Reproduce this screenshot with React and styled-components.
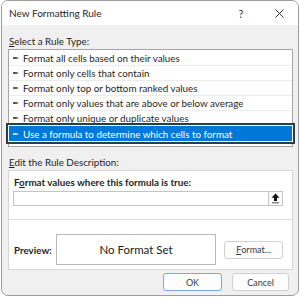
import React from "react";
import styled, { createGlobalStyle } from "styled-components";

const Global = createGlobalStyle`
  html, body {
    margin: 0;
    padding: 0;
    background: #ffffff;
  }
  body {
    font-family: Lato, "Noto Sans", sans-serif;
    color: #1f1f1f;
  }
`;

const Window = styled.div`
  box-sizing: border-box;
  width: 298px;
  height: 296px;
  margin-left: 1px;
  border: 1px solid #9c9c9c;
  border-radius: 7px;
  overflow: hidden;
  background: #f0f0f0;
  display: flex;
  flex-direction: column;
`;

const TitleBar = styled.div`
  height: 24px;
  background: #ffffff;
  display: flex;
  align-items: center;
  padding: 0 0 0 7px;
  font-size: 10px;
`;

const Title = styled.div`
  flex: 1;
`;

const TitleButton = styled.div`
  width: ${(p) => p.w}px;
  display: flex;
  justify-content: center;
  align-items: center;
  font-size: 11px;
  color: #333;
`;

const Body = styled.div`
  flex: 1;
  padding: 0 5px 0 6px;
  display: flex;
  flex-direction: column;
  font-size: 9.8px;
`;

const Label = styled.div`
  height: 12px;
  line-height: 12px;
  margin-top: ${(p) => p.top}px;
  padding-left: 1px;
`;

const Key = styled.span`
  text-decoration: underline;
  text-underline-offset: 1px;
`;

const ListBox = styled.div`
  margin-top: 2px;
  height: 98px;
  box-sizing: border-box;
  border: 1px solid #a4a4a4;
  background: #fff;
  padding-top: 1px;
`;

const Row = styled.div`
  position: relative;
  box-sizing: border-box;
  height: ${(p) => (p.selected ? 21 : 15)}px;
  margin: ${(p) => (p.selected ? "-3px -3px 0 -3px" : "0")};
  display: flex;
  align-items: center;
  gap: 4px;
  padding-left: ${(p) => (p.selected ? 5 : 4)}px;
  border-bottom: 1px solid #ececec;
  background: ${(p) => (p.selected ? "#0078d7" : "transparent")};
  color: ${(p) => (p.selected ? "#ffffff" : "#1f1f1f")};
  ${(p) =>
    p.selected &&
    `
    border: 2px solid #25404c;
    box-shadow: inset 0 0 0 1px #ffffff;
    z-index: 1;
  `}
`;

const Panel = styled.div`
  margin-top: 2px;
  height: 100px;
  box-sizing: border-box;
  border: 1px solid #d6d6d6;
  background: #fff;
  display: flex;
  flex-direction: column;
`;

const Heading = styled.div`
  font-weight: 700;
  padding: 5px 0 0 5px;
  height: 12px;
  line-height: 12px;
`;

const InputRow = styled.div`
  display: flex;
  margin: 3px 9px 0 4px;
  height: 15px;
`;

const Input = styled.div`
  flex: 1;
  box-sizing: border-box;
  border: 1px solid #c4c4c4;
  border-right: none;
`;

const IconButton = styled.div`
  width: 15px;
  box-sizing: border-box;
  border: 1px solid #c4c4c4;
  display: flex;
  align-items: center;
  justify-content: center;
  background: #fbfbfb;
`;

const Divider = styled.div`
  margin-top: 13px;
  border-top: 1px solid #dedede;
`;

const PreviewRow = styled.div`
  display: flex;
  align-items: center;
  margin-top: 14px;
  padding: 0 9px 0 5px;
`;

const PreviewLabel = styled.div`
  font-weight: 700;
  width: 42px;
`;

const PreviewBox = styled.div`
  width: 161px;
  height: 31px;
  box-sizing: border-box;
  border: 1px solid #b8b8b8;
  display: flex;
  align-items: center;
  justify-content: center;
  font-size: 11.5px;
  color: #1a1a1a;
`;

const Button = styled.div`
  box-sizing: border-box;
  width: ${(p) => p.w}px;
  height: 18px;
  margin-left: ${(p) => p.ml || 0}px;
  border: 1px solid ${(p) => (p.primary ? "#7aa8d8" : "#d0d0d0")};
  border-radius: 3px;
  background: #fdfdfd;
  display: flex;
  align-items: center;
  justify-content: center;
  font-size: 9px;
  color: #3a3a3a;
`;

const Footer = styled.div`
  display: flex;
  justify-content: flex-end;
  margin-top: 3px;
  padding-right: 4px;
`;

const Arrow = ({ color }) => (
  <svg width="6" height="4" viewBox="0 0 6 4">
    <path d="M0 1.2 H3.4 L6 2 L3.4 2.8 H0 Z" fill={color} />
  </svg>
);

const UpIcon = () => (
  <svg width="9" height="11" viewBox="0 0 9 11">
    <path d="M4.5 0.5 L8.5 4.8 H6 V8 H3 V4.8 H0.5 Z" fill="#111" />
    <rect x="1" y="9.3" width="7" height="1" fill="#555" />
  </svg>
);

const CloseIcon = () => (
  <svg width="9" height="9" viewBox="0 0 9 9">
    <path d="M0.5 0.5 L8.5 8.5 M8.5 0.5 L0.5 8.5" stroke="#333" strokeWidth="1" />
  </svg>
);

const rules = [
  "Format all cells based on their values",
  "Format only cells that contain",
  "Format only top or bottom ranked values",
  "Format only values that are above or below average",
  "Format only unique or duplicate values",
  "Use a formula to determine which cells to format",
];

export default function App() {
  return (
    <>
      <Global />
      <Window>
        <TitleBar>
          <Title>New Formatting Rule</Title>
          <TitleButton w={38}>?</TitleButton>
          <TitleButton w={38}>
            <CloseIcon />
          </TitleButton>
        </TitleBar>
        <Body>
          <Label top={10}>
            <Key>S</Key>elect a Rule Type:
          </Label>
          <ListBox>
            {rules.map((r, i) => (
              <Row key={r} selected={i === 5}>
                <Arrow color={i === 5 ? "#fff" : "#222"} />
                {r}
              </Row>
            ))}
          </ListBox>
          <Label top={9}>
            <Key>E</Key>dit the Rule Description:
          </Label>
          <Panel>
            <Heading>
              F<Key>o</Key>rmat values where this formula is true:
            </Heading>
            <InputRow>
              <Input />
              <IconButton>
                <UpIcon />
              </IconButton>
            </InputRow>
            <Divider />
            <PreviewRow>
              <PreviewLabel>Preview:</PreviewLabel>
              <PreviewBox>No Format Set</PreviewBox>
              <Button w={59} ml={8}>
                <Key>F</Key>ormat...
              </Button>
            </PreviewRow>
          </Panel>
          <Footer>
            <Button w={59} primary>
              OK
            </Button>
            <Button w={57} ml={10}>
              Cancel
            </Button>
          </Footer>
        </Body>
      </Window>
    </>
  );
}
